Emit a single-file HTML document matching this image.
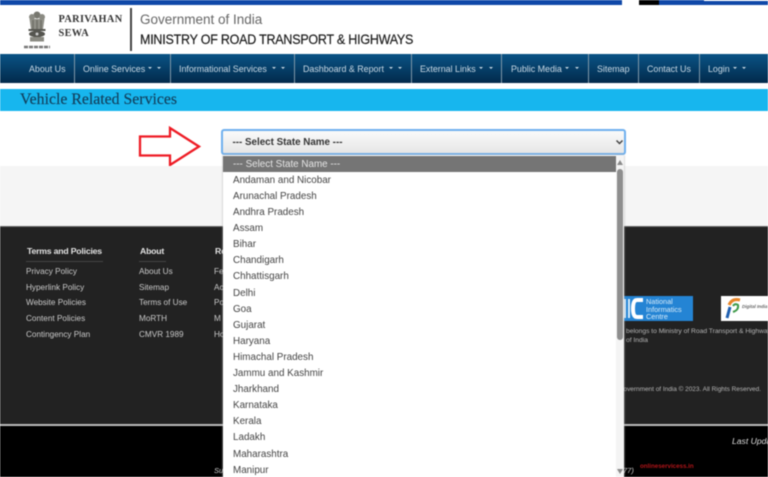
<!DOCTYPE html>
<html><head><meta charset="utf-8">
<style>
html,body{margin:0;padding:0;background:#fff;}
#p{position:relative;width:768px;height:477px;overflow:hidden;background:#fff;font-family:"Liberation Sans",sans-serif;filter:blur(.4px);}
#p div,#p svg{position:absolute;}
.t{white-space:nowrap;}
.b{top:54px;width:1px;height:29px;background:#7f97a8;}
.nv{top:54.500px;height:29px;line-height:29px;color:#c8d8e4;font-size:8.900px;white-space:nowrap;}
.tr{width:0;height:0;top:67px;border-left:2.200px solid transparent;border-right:2.200px solid transparent;border-top:2.600px solid #c8d8e4;}
.f{color:#c9c9c9;font-size:8.200px;white-space:nowrap;line-height:12px;}
.fh{color:#e4e4e4;font-size:8.700px;font-weight:bold;white-space:nowrap;letter-spacing:-.2px;line-height:12px;}
.o{left:233px;color:#444;font-size:9.850px;line-height:16px;white-space:nowrap;}
</style></head><body>
<div id="p">
<div style="left:0;top:0;width:622px;height:5px;background:#0f48a8"></div>
<div style="left:639px;top:0;width:20px;height:5px;background:#000"></div>
<div style="left:659px;top:0;width:109px;height:5px;background:#0f48a8"></div>
<div style="left:704px;top:0;width:64px;height:1px;background:#fff"></div>

<svg style="left:20px;top:10px" width="34" height="40" viewBox="0 0 34 40">
<circle cx="17" cy="5" r="3.500" fill="#77776f"/>
<circle cx="12" cy="7" r="3" fill="#8a8a82"/>
<circle cx="22" cy="7" r="3" fill="#8a8a82"/>
<path d="M9.500 9H24.500L23 19H11Z" fill="#8e8e86"/>
<path d="M13 10V19M17 10V19M21 10V19" stroke="#66665f" stroke-width="1"/>
<rect x="8.500" y="19" width="17" height="2" fill="#55554f"/>
<ellipse cx="17" cy="24" rx="8" ry="3.200" fill="#55554f"/>
<circle cx="17" cy="24" r="1.500" fill="#ccc"/>
<rect x="10" y="27" width="14" height="4.500" fill="#8a8a82"/>
<path d="M4 37H30" stroke="#777" stroke-width="2.500" stroke-dasharray="4 1"/>
</svg>
<div class="t" style="left:58.500px;top:13px;font:bold 10.300px/14px 'Liberation Serif',serif;color:#333;letter-spacing:.35px">PARIVAHAN<br>SEWA</div>
<div style="left:130px;top:8px;width:2px;height:43px;background:#444"></div>
<div class="t" style="left:140px;top:11px;font-size:13.500px;line-height:17px;color:#666">Government of India</div>
<div class="t" style="left:140px;top:30.500px;font-size:13.600px;line-height:18px;color:#1d1d1d;letter-spacing:-.25px;-webkit-text-stroke:.2px #1d1d1d;transform:scaleX(.92);transform-origin:left">MINISTRY OF ROAD TRANSPORT &amp; HIGHWAYS</div>

<div style="left:0;top:54px;width:768px;height:29px;background:linear-gradient(#0a5385,#022a4b)"></div>
<div class="b" style="left:74px"></div><div class="b" style="left:170px"></div><div class="b" style="left:294px"></div><div class="b" style="left:411px"></div><div class="b" style="left:501px"></div><div class="b" style="left:588px"></div><div class="b" style="left:638px"></div><div class="b" style="left:699px"></div>
<div class="nv" style="left:29px">About Us</div>
<div class="nv" style="left:83px">Online Services</div><div class="tr" style="left:148px"></div><div class="tr" style="left:157px"></div>
<div class="nv" style="left:179px">Informational Services</div><div class="tr" style="left:272px"></div><div class="tr" style="left:281px"></div>
<div class="nv" style="left:303px">Dashboard &amp; Report</div><div class="tr" style="left:389px"></div><div class="tr" style="left:398px"></div>
<div class="nv" style="left:420px">External Links</div><div class="tr" style="left:479px"></div><div class="tr" style="left:489px"></div>
<div class="nv" style="left:511px">Public Media</div><div class="tr" style="left:565px"></div><div class="tr" style="left:575px"></div>
<div class="nv" style="left:597px">Sitemap</div>
<div class="nv" style="left:647px">Contact Us</div>
<div class="nv" style="left:708px">Login</div><div class="tr" style="left:733px"></div><div class="tr" style="left:742px"></div>

<div style="left:0;top:89px;width:768px;height:22px;background:#17b6ee"></div>
<div class="t" style="left:20px;top:91px;font:15.800px/18px 'Liberation Serif',serif;color:#123f5c;-webkit-text-stroke:.15px #123f5c">Vehicle Related Services</div>

<svg style="left:137px;top:124px" width="66" height="44" viewBox="0 0 66 44">
<path d="M3 12.500H33V4L62 22.500 33 41V31.500H3Z" fill="#fff" stroke="#ee1c25" stroke-width="2.300"/>
</svg>

<div style="left:0;top:166px;width:768px;height:60px;background:#f5f5f5"></div>
<div style="left:0;top:226px;width:768px;height:198px;background:#222;border-top:1px solid #666;box-sizing:border-box"></div>
<div style="left:0;top:424px;width:768px;height:2px;background:#bbb"></div>
<div style="left:0;top:426px;width:768px;height:51px;background:#000"></div>

<div class="fh" style="left:27px;top:244.500px">Terms and Policies</div>
<div style="left:26px;top:261px;width:77px;height:1px;background:#444"></div>
<div class="f" style="left:26px;top:265.500px">Privacy Policy</div>
<div class="f" style="left:26px;top:281.500px">Hyperlink Policy</div>
<div class="f" style="left:26px;top:297px">Website Policies</div>
<div class="f" style="left:26px;top:313px">Content Policies</div>
<div class="f" style="left:26px;top:329px">Contingency Plan</div>
<div class="fh" style="left:140px;top:244.500px">About</div>
<div style="left:139px;top:261px;width:27px;height:1px;background:#444"></div>
<div class="f" style="left:139px;top:265.500px">About Us</div>
<div class="f" style="left:139px;top:281.500px">Sitemap</div>
<div class="f" style="left:139px;top:297px">Terms of Use</div>
<div class="f" style="left:139px;top:313px">MoRTH</div>
<div class="f" style="left:139px;top:329px">CMVR 1989</div>
<div class="fh" style="left:215px;top:244.500px">Re</div>
<div class="f" style="left:214px;top:265.500px">Fe</div>
<div class="f" style="left:214px;top:281.500px">Ac</div>
<div class="f" style="left:214px;top:297px">Po</div>
<div class="f" style="left:214px;top:313px">M</div>
<div class="f" style="left:214px;top:329px">Ho</div>

<div style="left:624px;top:296px;width:69px;height:25px;background:#2484d4"></div>
<div class="t" style="left:646px;top:298px;font-size:7.300px;line-height:7.600px;color:#d8ecfa">National<br>Informatics<br>Centre</div>
<svg style="left:624px;top:297px" width="20" height="23" viewBox="0 0 20 23"><path d="M1 2V21M5 2V21" stroke="#d8ecfa" stroke-width="2"/><path d="M19 3H13Q9 3 9 11.500T13 20H19" fill="none" stroke="#fff" stroke-width="4"/></svg>
<div style="left:721px;top:296px;width:47px;height:25px;background:#fff"></div>
<svg style="left:724px;top:297px" width="22" height="23" viewBox="0 0 22 23"><path d="M5 8Q8 1 16 3" fill="none" stroke="#e8862a" stroke-width="3"/><path d="M9 9Q11 6 14 8Q15 13 9 15" fill="none" stroke="#3f9a4a" stroke-width="2"/><path d="M6 10L3 21" stroke="#1f5fb0" stroke-width="3"/></svg>
<div class="t" style="left:742px;top:304px;font-size:4.500px;font-style:italic;font-weight:bold;color:#666">Digital India</div>
<div class="f" style="left:626px;top:328px;font-size:6.700px;line-height:8.500px;color:#b5b5b5">belongs to Ministry of Road Transport &amp; Highways<br>of India</div>
<div class="f" style="left:623.500px;top:384px;font-size:6.450px;line-height:12px;color:#b5b5b5">overnment of India © 2023. All Rights Reserved.</div>
<div class="t" style="left:732px;top:435px;font-size:8.600px;line-height:12px;font-style:italic;color:#ddd">Last Updated</div>
<div class="t" style="left:214px;top:466px;font-size:7.500px;line-height:10px;font-style:italic;color:#ccc">Su</div>
<div class="t" style="left:623px;top:466px;font-size:7.500px;line-height:10px;font-style:italic;color:#ccc">77)</div>
<div class="t" style="left:640px;top:461.500px;font-size:6.200px;line-height:10px;color:#b01418;font-weight:bold">onlineservicess.in</div>

<div style="left:221px;top:129px;width:405px;height:26px;box-sizing:border-box;border:2px solid #6fb0ee;border-radius:3px;background:linear-gradient(#fafafa,#e6e6e6)"></div>
<div class="t" style="left:232.500px;top:136px;font-size:9.800px;line-height:13px;font-weight:bold;color:#333">--- Select State Name ---</div>
<svg style="left:615px;top:139px" width="9" height="6" viewBox="0 0 9 6"><path d="M1.500 1.500L4.500 4.500 7.500 1.500" fill="none" stroke="#444" stroke-width="1.500"/></svg>

<div style="left:223px;top:155px;width:401px;height:322px;background:#fff;box-shadow:0 0 2px #aaa"></div>
<div style="left:223px;top:156px;width:393px;height:16px;background:#757575"></div>
<div class="o" style="top:156.500px;color:#e6e6e6">--- Select State Name ---</div>
<div class="o" style="top:172.500px">Andaman and Nicobar</div>
<div class="o" style="top:188.500px">Arunachal Pradesh</div>
<div class="o" style="top:204.500px">Andhra Pradesh</div>
<div class="o" style="top:221px">Assam</div>
<div class="o" style="top:237px">Bihar</div>
<div class="o" style="top:253px">Chandigarh</div>
<div class="o" style="top:269px">Chhattisgarh</div>
<div class="o" style="top:285.500px">Delhi</div>
<div class="o" style="top:301.500px">Goa</div>
<div class="o" style="top:317.500px">Gujarat</div>
<div class="o" style="top:333.500px">Haryana</div>
<div class="o" style="top:349.500px">Himachal Pradesh</div>
<div class="o" style="top:365.500px">Jammu and Kashmir</div>
<div class="o" style="top:382px">Jharkhand</div>
<div class="o" style="top:398px">Karnataka</div>
<div class="o" style="top:414px">Kerala</div>
<div class="o" style="top:430px">Ladakh</div>
<div class="o" style="top:446.500px">Maharashtra</div>
<div class="o" style="top:462.500px">Manipur</div>
<div style="left:616px;top:155px;width:8px;height:322px;background:#f4f4f4"></div>
<div style="left:617px;top:169px;width:6px;height:171px;background:#8e8e8e;border-radius:3px"></div>
<svg style="left:616px;top:159px" width="8" height="7" viewBox="0 0 8 7"><path d="M4 1L7 6H1Z" fill="#8a8a8a"/></svg>
<svg style="left:616px;top:468px" width="8" height="7" viewBox="0 0 8 7"><path d="M4 6L7 1H1Z" fill="#8a8a8a"/></svg>
</div>
</body></html>
